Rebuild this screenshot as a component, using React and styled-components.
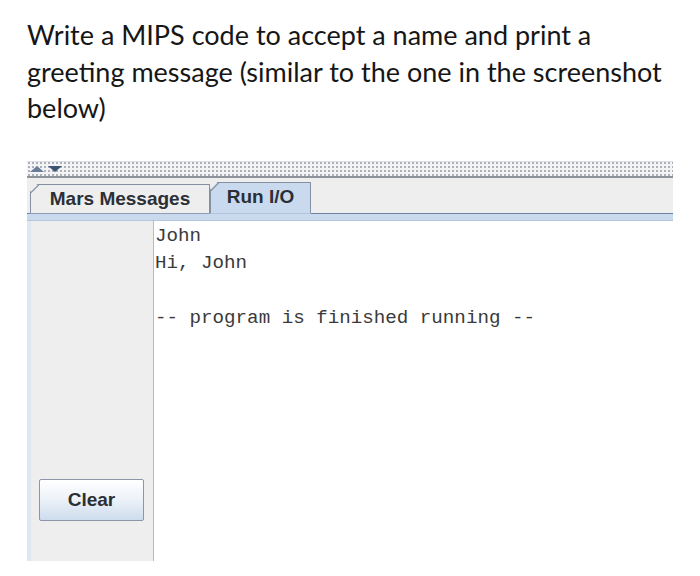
import React from "react";
import styled, { createGlobalStyle } from "styled-components";

const Global = createGlobalStyle`
  html, body { margin: 0; padding: 0; background: #ffffff; }
  body { width: 700px; height: 576px; overflow: hidden; }
`;

const Page = styled.div`
  padding: 17px 0 0 27px;
`;

const Question = styled.p`
  margin: 0;
  font-family: Lato, "Liberation Sans", sans-serif;
  font-size: 27px;
  line-height: 36.5px;
  color: #161616;
  width: 650px;
`;

const Window = styled.div`
  margin-top: 34px;
  width: 646px;
  display: flex;
  flex-direction: column;
`;

const Strip = styled.div`
  height: 14px;
  border-top: 1px solid #dcdfe3;
  border-bottom: 2px solid #8d929b;
  background-color: #f4f4f4;
  background-image: radial-gradient(circle, #a8afb8 0.7px, transparent 0.9px);
  background-size: 4px 4px;
  background-position: 0 3px;
  display: flex;
  align-items: center;
  gap: 4px;
  padding-left: 3px;
`;

const Arrow = styled.span`
  width: 0;
  height: 0;
  border-left: 7px solid transparent;
  border-right: 7px solid transparent;
  ${(p) =>
    p.$up
      ? "border-bottom: 6px solid #6a7d98;"
      : "border-top: 6px solid #3e5273;"}
`;

const TabBar = styled.div`
  height: 35px;
  background: #eeeeee;
  border-bottom: 1px solid #6f84a3;
  display: flex;
  align-items: flex-end;
  padding-left: 3px;
`;

const Tab = styled.div`
  position: relative;
  box-sizing: border-box;
  width: ${(p) => p.$w}px;
  height: ${(p) => (p.$active ? "32px" : "30px")};
  margin-bottom: -1px;
  background: ${(p) => (p.$active ? "#c9daee" : "#eeeeee")};
  border: 1px solid #8591a3;
  border-bottom: ${(p) => (p.$active ? "1px solid #c9daee" : "1px solid #6f84a3")};
  clip-path: polygon(8px 0, 100% 0, 100% 100%, 0 100%, 0 8px);
  display: flex;
  align-items: center;
  justify-content: center;
  padding-bottom: ${(p) => (p.$active ? "2px" : "0")};
  font-family: "Liberation Sans", Arial, sans-serif;
  font-weight: bold;
  font-size: 19px;
  color: #2b2f36;
`;

const Corner = styled.svg`
  position: absolute;
  left: -1px;
  top: -1px;
`;

const Band = styled.div`
  height: 6px;
  background: #c9daee;
  border-bottom: 1px solid #b7c6da;
`;

const Body = styled.div`
  display: flex;
  height: 340px;
`;

const Side = styled.div`
  width: 122px;
  background: #eeeeee;
  border-left: 4px solid #dfe7f2;
  border-right: 1px solid #b8bcc2;
  display: flex;
  flex-direction: column;
  justify-content: flex-end;
  padding-bottom: 40px;
`;

const ClearButton = styled.button`
  margin-left: 8px;
  width: 105px;
  height: 42px;
  border: 1px solid #8b96a6;
  border-radius: 2px;
  background: linear-gradient(#ffffff 0%, #eef3f9 45%, #cddcee 100%);
  font-family: "Liberation Sans", Arial, sans-serif;
  font-weight: bold;
  font-size: 19px;
  color: #2b2f36;
  padding: 0;
`;

const Console = styled.pre`
  flex: 1;
  margin: 0;
  padding: 2px 0 0 1px;
  background: #ffffff;
  font-family: "Liberation Mono", "Courier New", monospace;
  font-size: 19.2px;
  line-height: 27.5px;
  color: #3a3a3a;
`;

function TabCorner() {
  return (
    <Corner width="10" height="10" viewBox="0 0 10 10">
      <path d="M0 9.5 L9.5 0" stroke="#8591a3" strokeWidth="1.2" fill="none" />
    </Corner>
  );
}

export default function App() {
  return (
    <>
      <Global />
      <Page>
        <Question>
          Write a MIPS code to accept a name and print a greeting message
          (similar to the one in the screenshot below)
        </Question>
        <Window>
          <Strip>
            <Arrow $up />
            <Arrow />
          </Strip>
          <TabBar>
            <Tab $w={180}>
              <TabCorner />
              Mars Messages
            </Tab>
            <Tab $active $w={101}>
              <TabCorner />
              Run I/O
            </Tab>
          </TabBar>
          <Band />
          <Body>
            <Side>
              <ClearButton>Clear</ClearButton>
            </Side>
            <Console>{"John\nHi, John\n\n-- program is finished running --"}</Console>
          </Body>
        </Window>
      </Page>
    </>
  );
}
